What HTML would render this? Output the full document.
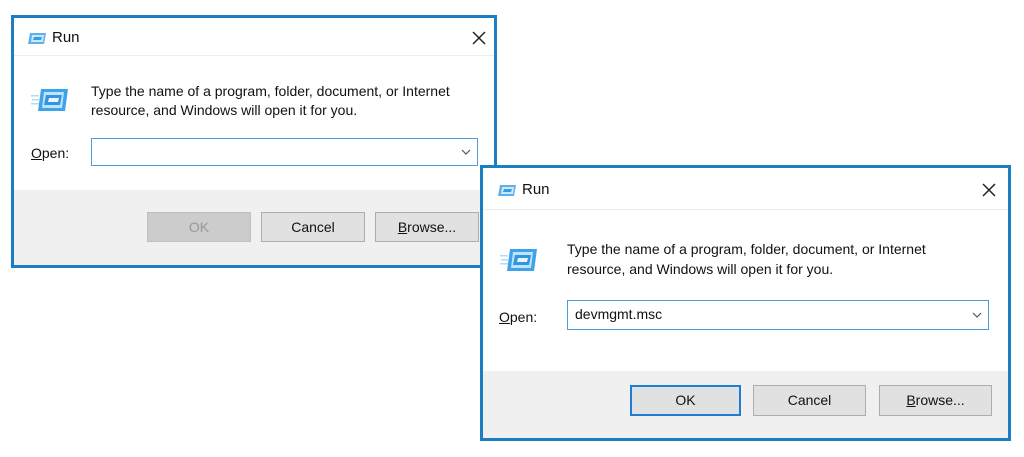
<!DOCTYPE html>
<html><head><meta charset="utf-8"><style>
*{margin:0;padding:0;box-sizing:border-box}
body{width:1024px;height:457px;background:#fff;position:relative;overflow:hidden;font-family:"Liberation Sans",sans-serif;color:#111}
.dlg{position:absolute;border:3px solid #1c7ec2;background:#fff;overflow:hidden}
.foot{position:absolute;left:0;right:0;bottom:0;background:#f0f0f0}
.sep{position:absolute;left:0;right:0;height:1px;background:#ececec}
.t{position:absolute;white-space:nowrap}
.btn{position:absolute;border:1px solid #adadad;background:#e1e1e1;font-size:14px;text-align:center;color:#111}
.inp{position:absolute;border:1px solid #4a9be0;background:#fff}
</style></head><body>

<svg width="0" height="0" style="position:absolute"><defs>
<symbol id="big" viewBox="0 0 38 26"><g fill="#6cb8ee"><rect x="0" y="8" width="8" height="1.5" opacity=".5"/><rect x="1" y="12" width="7" height="1.5" opacity=".5"/><rect x="0" y="16" width="8" height="1.5" opacity=".5"/></g>
<polygon points="10,2 37,2 34,24 7,24" fill="#3fa3ea"/><polygon points="13,5 33,5 31,21 11,21" fill="#bfe3fa"/><polygon points="15,8 31,8 29,18 13,18" fill="#3196dd"/><polygon points="18,11 28,11 27,15 17,15" fill="#e8f5ff"/></symbol>
<symbol id="sm" viewBox="0 0 20 13"><polygon points="3,1 19,1 17,12 1,12" fill="#5fb0ea"/><polygon points="5,3 17,3 16,10 4,10" fill="#cbe8fb"/><polygon points="7,5 15,5 14,8 6,8" fill="#3b9be0"/></symbol>
</defs></svg>

<!-- Dialog 1 -->
<div class="dlg" style="left:11px;top:15px;width:486px;height:253px">
 <svg class="t" style="left:13px;top:14px" width="20" height="13"><use href="#sm"/></svg>
 <div class="t" style="left:38px;top:11px;font-size:15px">Run</div>
 <svg class="t" style="left:458px;top:13px" width="14" height="14"><path d="M1 1L13 13M13 1L1 13" stroke="#222" stroke-width="1.5"/></svg>
 <div class="sep" style="top:37px"></div>
 <svg class="t" style="left:17px;top:69px" width="38" height="26"><use href="#big"/></svg>
 <div class="t" style="left:77px;top:64px;font-size:14px;line-height:19px">Type the name of a program, folder, document, or Internet<br>resource, and Windows will open it for you.</div>
 <div class="t" style="left:17px;top:127px;font-size:14px"><u>O</u>pen:</div>
 <div class="inp" style="left:77px;top:120px;width:387px;height:28px"><svg class="t" style="right:6px;top:10px" width="10" height="7"><path d="M1 1L5 5L9 1" stroke="#555" fill="none" stroke-width="1.2"/></svg></div>
 <div class="foot" style="height:75px">
  <div class="btn" style="left:133px;top:22px;width:104px;height:30px;line-height:28px;color:#999;background:#ccc;border-color:#bfbfbf">OK</div>
  <div class="btn" style="left:247px;top:22px;width:104px;height:30px;line-height:28px">Cancel</div>
  <div class="btn" style="left:361px;top:22px;width:104px;height:30px;line-height:28px"><u>B</u>rowse...</div>
 </div>
</div>

<!-- Dialog 2 -->
<div class="dlg" style="left:480px;top:165px;width:531px;height:276px">
 <svg class="t" style="left:14px;top:16px" width="20" height="13"><use href="#sm"/></svg>
 <div class="t" style="left:39px;top:13px;font-size:15px">Run</div>
 <svg class="t" style="left:499px;top:15px" width="14" height="14"><path d="M1 1L13 13M13 1L1 13" stroke="#222" stroke-width="1.5"/></svg>
 <div class="sep" style="top:41px"></div>
 <svg class="t" style="left:17px;top:79px" width="38" height="26"><use href="#big"/></svg>
 <div class="t" style="left:84px;top:71px;font-size:14px;line-height:20px">Type the name of a program, folder, document, or Internet<br>resource, and Windows will open it for you.</div>
 <div class="t" style="left:16px;top:141px;font-size:14px"><u>O</u>pen:</div>
 <div class="inp" style="left:84px;top:132px;width:422px;height:30px"><div class="t" style="left:7px;top:5px;font-size:14px">devmgmt.msc</div><svg class="t" style="right:6px;top:11px" width="10" height="7"><path d="M1 1L5 5L9 1" stroke="#555" fill="none" stroke-width="1.2"/></svg></div>
 <div class="foot" style="height:67px">
  <div class="btn" style="left:147px;top:14px;width:111px;height:31px;line-height:27px;border:2px solid #1e7ed6">OK</div>
  <div class="btn" style="left:270px;top:14px;width:113px;height:31px;line-height:29px">Cancel</div>
  <div class="btn" style="left:396px;top:14px;width:113px;height:31px;line-height:29px"><u>B</u>rowse...</div>
 </div>
</div>
</body></html>
